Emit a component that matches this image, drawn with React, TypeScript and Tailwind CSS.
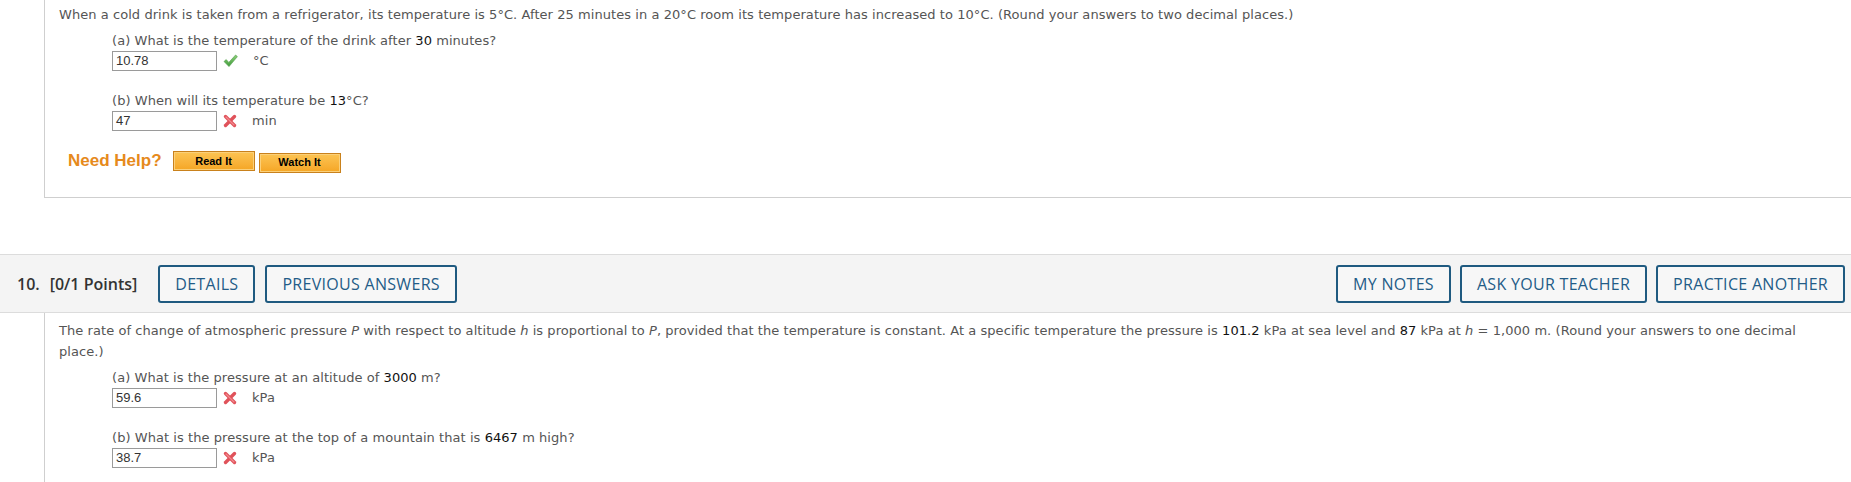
import type { ReactNode } from "react";

const bodyFont = { fontFamily: '"DejaVu Sans", Verdana, sans-serif' };

const CheckIcon = () => (
  <svg width="15" height="14" viewBox="0 0 15 14" className="shrink-0">
    <defs>
      <linearGradient id="chk" x1="0" y1="0" x2="0" y2="1">
        <stop offset="0" stopColor="#8fd07a" />
        <stop offset="1" stopColor="#3f9a3a" />
      </linearGradient>
    </defs>
    <path
      d="M1 7.5 L3.2 5.6 L5.8 8.4 L12.6 1 L14.4 2.6 L6 12.6 Z"
      fill="url(#chk)"
      stroke="#4a9a44"
      strokeWidth="0.6"
      strokeLinejoin="round"
    />
  </svg>
);

const CrossIcon = () => (
  <svg width="14" height="14" viewBox="0 0 14 14" className="shrink-0">
    <g stroke="#e0525a" strokeWidth="3.4" strokeLinecap="round">
      <line x1="2.5" y1="2.5" x2="11.5" y2="11.5" />
      <line x1="11.5" y1="2.5" x2="2.5" y2="11.5" />
    </g>
    <g stroke="#f28b90" strokeWidth="1.1" strokeLinecap="round">
      <line x1="3" y1="3" x2="11" y2="11" />
    </g>
  </svg>
);

type PartProps = {
  label: ReactNode;
  value: string;
  ok: boolean;
  unit: string;
  first?: boolean;
};

const Part = ({ label, value, ok, unit, first }: PartProps) => (
  <div className={first ? "ml-[53px] mt-[7px]" : "ml-[53px] mt-[21px]"}>
    <div className="leading-[18px] text-[13px] text-[#555]">{label}</div>
    <div className="mt-[1px] flex items-center">
      <div
        className="h-[20px] w-[105px] border border-[#9a9a9a] bg-white pl-[3px] text-[13px] leading-[18px] tracking-normal text-[#333]"
        style={{ fontFamily: '"Liberation Sans", Arial, sans-serif' }}
      >
        {value}
      </div>
      <span className="ml-[6px]">{ok ? <CheckIcon /> : <CrossIcon />}</span>
      <span className="ml-[15px] text-[13px] text-[#555]">{unit}</span>
    </div>
  </div>
);

const Dark = ({ children }: { children: ReactNode }) => (
  <span className="text-[#111]">{children}</span>
);

const HeadBtn = ({ children }: { children: ReactNode }) => (
  <button className="h-[38px] rounded-[3px] border-2 border-[#1f5a80] bg-[#f7f7f7] px-[15px] text-[16px] leading-none tracking-[0.3px] text-[#235c87]">
    {children}
  </button>
);

const HelpBtn = ({ children }: { children: ReactNode }) => (
  <button
    className="h-[20px] w-[82px] border border-[#c9811c] bg-gradient-to-b from-[#fcc452] to-[#f5a623] text-[11px] font-bold leading-none text-black shadow-[inset_0_0_0_1px_#fbd07a]"
    style={{ fontFamily: '"Liberation Sans", Arial, sans-serif' }}
  >
    {children}
  </button>
);

export default function App() {
  return (
    <div className="h-[482px] w-[1851px] overflow-hidden bg-white tracking-[0.06px]" style={bodyFont}>
      <div className="ml-[44px] border-b border-l border-[#cfcfcf] pb-[26px] pl-[14px] pt-[4px]">
        <p className="text-[13px] leading-[21px] text-[#555]">
          When a cold drink is taken from a refrigerator, its temperature is 5°C. After 25 minutes in a 20°C room its
          temperature has increased to 10°C. (Round your answers to two decimal places.)
        </p>
        <Part
          first
          label={
            <>
              (a) What is the temperature of the drink after <Dark>30</Dark> minutes?
            </>
          }
          value="10.78"
          ok
          unit="°C"
        />
        <Part
          label={
            <>
              (b) When will its temperature be <Dark>13</Dark>°C?
            </>
          }
          value="47"
          ok={false}
          unit="min"
        />
        <div className="ml-[9px] mt-[20px] flex h-[20px] items-center tracking-normal">
          <span
            className="mr-[11px] text-[17px] font-bold text-[#e68a1c]"
            style={{ fontFamily: '"Liberation Sans", Arial, sans-serif' }}
          >
            Need Help?
          </span>
          <HelpBtn>Read It</HelpBtn>
          <span className="ml-[4px]">
            <HelpBtn>Watch It</HelpBtn>
          </span>
        </div>
      </div>

      <div
        className="mt-[56px] flex h-[59px] items-center justify-between border-y border-[#dcdcdc] bg-[#f4f4f4] pr-[6px] tracking-normal"
        style={{ fontFamily: '"Open Sans", sans-serif' }}
      >
        <div className="flex items-center">
          <span className="ml-[17px] text-[16px] font-semibold text-[#333]">10.</span>
          <span className="ml-[10px] text-[16px] font-semibold text-[#333]">[0/1 Points]</span>
          <div className="ml-[21px] flex gap-[10px]">
            <HeadBtn>DETAILS</HeadBtn>
            <HeadBtn>PREVIOUS ANSWERS</HeadBtn>
          </div>
        </div>
        <div className="flex gap-[9px]">
          <HeadBtn>MY NOTES</HeadBtn>
          <HeadBtn>ASK YOUR TEACHER</HeadBtn>
          <HeadBtn>PRACTICE ANOTHER</HeadBtn>
        </div>
      </div>

      <div className="ml-[44px] h-[200px] border-l border-[#cfcfcf] pl-[14px] pr-[40px] pt-[7px]">
        <p className="text-[13px] leading-[21px] text-[#555]">
          The rate of change of atmospheric pressure <i>P</i> with respect to altitude <i>h</i> is proportional to{" "}
          <i>P</i>, provided that the temperature is constant. At a specific temperature the pressure is{" "}
          <Dark>101.2</Dark> kPa at sea level and <Dark>87</Dark> kPa at <i>h</i> = 1,000 m. (Round your answers to
          one decimal place.)
        </p>
        <Part
          first
          label={
            <>
              (a) What is the pressure at an altitude of <Dark>3000</Dark> m?
            </>
          }
          value="59.6"
          ok={false}
          unit="kPa"
        />
        <Part
          label={
            <>
              (b) What is the pressure at the top of a mountain that is <Dark>6467</Dark> m high?
            </>
          }
          value="38.7"
          ok={false}
          unit="kPa"
        />
      </div>
    </div>
  );
}
